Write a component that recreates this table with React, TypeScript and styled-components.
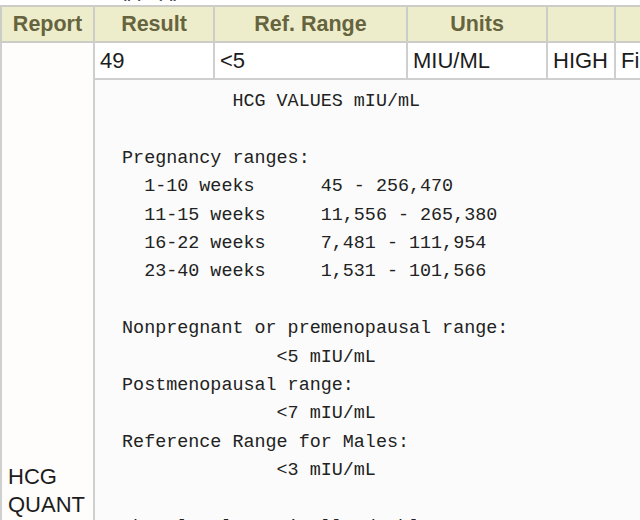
import React from 'react';
import styled, { createGlobalStyle } from 'styled-components';

const GlobalStyle = createGlobalStyle`
  html, body {
    margin: 0;
    padding: 0;
    background: #ffffff;
    overflow: hidden;
  }
`;

const Page = styled.div`
  width: 640px;
  height: 520px;
  overflow: hidden;
  font-family: "Liberation Sans", Arial, sans-serif;
`;

const Caption = styled.div`
  height: 5px;
  overflow: hidden;
  display: flex;
  align-items: flex-end;
  padding-left: 120px;
  font-size: 20px;
  line-height: 20px;
  color: #444;
`;

const CaptionText = styled.span`
  display: block;
  margin-bottom: 5px;
`;

const Table = styled.table`
  border-collapse: collapse;
  table-layout: fixed;
  width: 814px;
`;

const Col = styled.col<{ $w: number }>`
  width: ${(p) => p.$w}px;
`;

const HeadCell = styled.th`
  height: 34px;
  padding: 0 4px;
  background: #eeedcb;
  color: #66643e;
  font-size: 21.5px;
  font-weight: bold;
  text-align: center;
  border: 2px solid #cdcdc8;
`;

const Cell = styled.td`
  height: 35px;
  padding: 0 5px;
  background: #ffffff;
  color: #1c1c1c;
  font-size: 22px;
  white-space: nowrap;
  overflow: hidden;
  border: 2px solid #cfcfcf;
`;

const ReportCell = styled.td`
  padding: 0 5px 0 6px;
  background: #fefdfb;
  color: #1c1c1c;
  font-size: 22px;
  line-height: 28px;
  vertical-align: middle;
  border: 2px solid #cfcfcf;
`;

const NoteCell = styled.td`
  padding: 8px 5px 28px 5px;
  background: #fbfbfb;
  vertical-align: top;
  border: 2px solid #cfcfcf;
`;

const Pre = styled.div`
  margin: 0;
  white-space: pre;
  font-family: "Liberation Mono", "Courier New", monospace;
  font-size: 18.4px;
  line-height: 28.4px;
  color: #222222;
`;

const note = [
  '            HCG VALUES mIU/mL',
  '',
  '  Pregnancy ranges:',
  '    1-10 weeks      45 - 256,470',
  '    11-15 weeks     11,556 - 265,380',
  '    16-22 weeks     7,481 - 111,954',
  '    23-40 weeks     1,531 - 101,566',
  '',
  '  Nonpregnant or premenopausal range:',
  '                <5 mIU/mL',
  '  Postmenopausal range:',
  '                <7 mIU/mL',
  '  Reference Range for Males:',
  '                <3 mIU/mL',
  '',
  '   hCG levels typically double every 48 to 72',
  '  hours in early normal pregnancy. Results',
  '  should be interpreted in conjunction with',
  '  clinical findings and ultrasound.',
  '',
  '  Elevated hCG may also be seen with',
  '  gestational trophoblastic disease and',
  '  certain germ cell tumors.',
  '',
  '  This test was performed on a Roche cobas',
  '  analyzer using an electrochemiluminescence',
  '  immunoassay (ECLIA). Results obtained with',
  '  different assay methods should not be used',
  '  interchangeably.',
  '',
].join('\n');

const headers = ['Report', 'Result', 'Ref. Range', 'Units', '', ''];
const widths = [93, 120, 193, 140, 68, 200];

export default function App() {
  return (
    <Page>
      <GlobalStyle />
      <Caption>
        <CaptionText>(p), (q)</CaptionText>
      </Caption>
      <Table>
        <colgroup>
          {widths.map((w, i) => (
            <Col key={i} $w={w} />
          ))}
        </colgroup>
        <thead>
          <tr>
            {headers.map((h, i) => (
              <HeadCell key={i}>{h}</HeadCell>
            ))}
          </tr>
        </thead>
        <tbody>
          <tr>
            <ReportCell rowSpan={2}>HCG QUANT</ReportCell>
            <Cell>49</Cell>
            <Cell>&lt;5</Cell>
            <Cell>MIU/ML</Cell>
            <Cell>HIGH</Cell>
            <Cell>Final</Cell>
          </tr>
          <tr>
            <NoteCell colSpan={5}>
              <Pre>{note}</Pre>
            </NoteCell>
          </tr>
        </tbody>
      </Table>
    </Page>
  );
}
